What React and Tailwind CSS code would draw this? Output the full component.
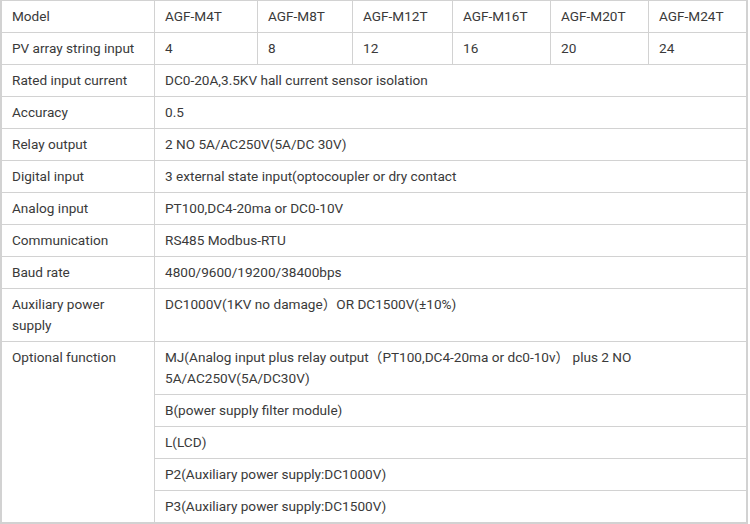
const models = ["AGF-M4T", "AGF-M8T", "AGF-M12T", "AGF-M16T", "AGF-M20T", "AGF-M24T"];
const strings = ["4", "8", "12", "16", "20", "24"];

const specs = [
  ["Rated input current", "DC0-20A,3.5KV hall current sensor isolation"],
  ["Accuracy", "0.5"],
  ["Relay output", "2 NO 5A/AC250V(5A/DC 30V)"],
  ["Digital input", "3 external state input(optocoupler or dry contact"],
  ["Analog input", "PT100,DC4-20ma or DC0-10V"],
  ["Communication", "RS485 Modbus-RTU"],
  ["Baud rate", "4800/9600/19200/38400bps"],
  ["Auxiliary power supply", "DC1000V(1KV no damage）OR DC1500V(±10%)"],
];

const options = [
  "MJ(Analog input plus relay output（PT100,DC4-20ma or dc0-10v） plus 2 NO 5A/AC250V(5A/DC30V)",
  "B(power supply filter module)",
  "L(LCD)",
  "P2(Auxiliary power supply:DC1000V)",
  "P3(Auxiliary power supply:DC1500V)",
];

const td = "border border-[#d2d2d2] px-[10px] py-[5px] align-top leading-[21px]";

export default function App() {
  return (
    <div className="w-[750px] h-[524px] bg-white font-['Roboto','Noto_Sans_CJK_SC',sans-serif] text-[13.6px] text-[#3a3a3a]">
      <div className="w-[748px] border-l border-r border-b border-[#d2d2d2]">
        <table className="w-full table-fixed border-collapse">
          <colgroup>
            <col className="w-[153px]" />
            <col className="w-[103px]" />
            <col className="w-[95px]" />
            <col className="w-[100px]" />
            <col className="w-[98px]" />
            <col className="w-[98px]" />
            <col />
          </colgroup>
          <tbody>
            <tr>
              <td className={td}>Model</td>
              {models.map((m) => (
                <td key={m} className={td}>{m}</td>
              ))}
            </tr>
            <tr>
              <td className={td}>PV array string input</td>
              {strings.map((s) => (
                <td key={s} className={td}>{s}</td>
              ))}
            </tr>
            {specs.map(([label, value]) => (
              <tr key={label}>
                <td className={td}>{label}</td>
                <td className={td} colSpan={6}>{value}</td>
              </tr>
            ))}
            {options.map((opt, i) => (
              <tr key={opt}>
                {i === 0 && (
                  <td className={td} rowSpan={options.length}>Optional function</td>
                )}
                <td className={td} colSpan={6}>{opt}</td>
              </tr>
            ))}
          </tbody>
        </table>
      </div>
    </div>
  );
}
